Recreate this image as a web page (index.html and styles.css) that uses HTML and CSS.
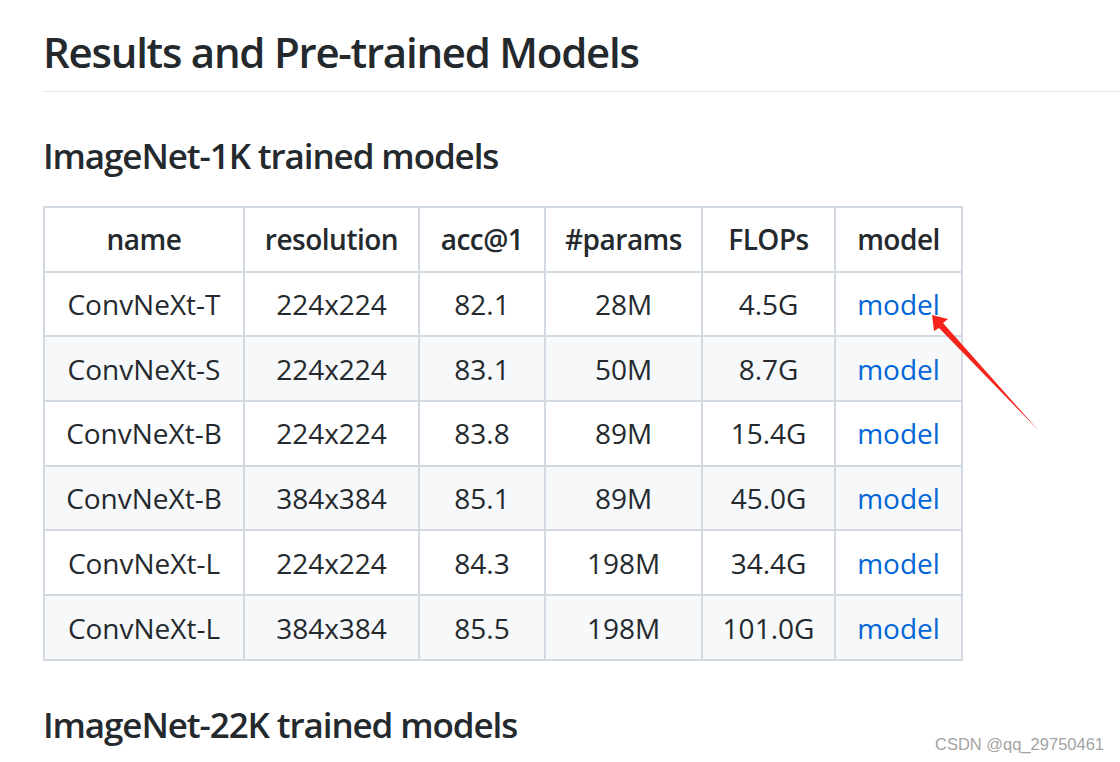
FILE: index.html
```html
<!DOCTYPE html>
<html>
<head>
<meta charset="utf-8">
<link rel="stylesheet" href="styles.css">
</head>
<body>
<div class="markdown">
  <h2 class="h2">Results and Pre-trained Models</h2>
  <h3 class="h3">ImageNet-1K trained models</h3>
  <table class="tbl">
    <colgroup>
      <col class="c1"><col class="c2"><col class="c3"><col class="c4"><col class="c5"><col class="c6">
    </colgroup>
    <thead>
      <tr><th>name</th><th>resolution</th><th>acc@1</th><th>#params</th><th>FLOPs</th><th>model</th></tr>
    </thead>
    <tbody>
      <tr><td>ConvNeXt-T</td><td>224x224</td><td>82.1</td><td>28M</td><td>4.5G</td><td><a class="lnk" href="#">model</a></td></tr>
      <tr><td>ConvNeXt-S</td><td>224x224</td><td>83.1</td><td>50M</td><td>8.7G</td><td><a class="lnk" href="#">model</a></td></tr>
      <tr><td>ConvNeXt-B</td><td>224x224</td><td>83.8</td><td>89M</td><td>15.4G</td><td><a class="lnk" href="#">model</a></td></tr>
      <tr><td>ConvNeXt-B</td><td>384x384</td><td>85.1</td><td>89M</td><td>45.0G</td><td><a class="lnk" href="#">model</a></td></tr>
      <tr><td>ConvNeXt-L</td><td>224x224</td><td>84.3</td><td>198M</td><td>34.4G</td><td><a class="lnk" href="#">model</a></td></tr>
      <tr><td>ConvNeXt-L</td><td>384x384</td><td>85.5</td><td>198M</td><td>101.0G</td><td><a class="lnk" href="#">model</a></td></tr>
    </tbody>
  </table>
  <h3 class="h3">ImageNet-22K trained models</h3>
</div>
<svg class="arrow" width="1120" height="762" viewBox="0 0 1120 762">
  <polygon points="932,315 948,319 943,323 1039,431 939,328 934,331" fill="#f5231b"/>
</svg>
<div class="watermark">CSDN @qq_29750461</div>
</body>
</html>
```
FILE: styles.css
```css
html, body {
  margin: 0;
  padding: 0;
  background: #ffffff;
  width: 1120px;
  height: 762px;
  overflow: hidden;
}
body {
  position: relative;
  font-family: "Open Sans", "Noto Sans", "Noto Sans CJK SC", sans-serif;
  color: #24292e;
  font-size: 28px;
  line-height: 1.5;
}
.markdown {
  padding: 26px 0 0 43px;
}
.h2 {
  margin: 0 0 28px 0;
  font-size: 42px;
  font-weight: 600;
  line-height: 52.5px;
  letter-spacing: -1.25px;
  padding-bottom: 12.6px;
  border-bottom: 1px solid #e4e7eb;
}
.h3 {
  margin: 42px 0 28px 0;
  font-size: 35px;
  font-weight: 600;
  line-height: 43.75px;
  letter-spacing: -1.1px;
}
.tbl {
  border-collapse: collapse;
  table-layout: fixed;
  width: 918px;
  margin: 0 0 28px 0;
}
.c1 { width: 200px; }
.c2 { width: 175px; }
.c3 { width: 126px; }
.c4 { width: 157px; }
.c5 { width: 133px; }
.c6 { width: 127px; }
.tbl th, .tbl td {
  border: 2px solid #d3d9e0;
  padding: 11.5px 0 9.5px 0;
  text-align: center;
  line-height: 41.7px;
  white-space: nowrap;
}
.tbl th {
  font-weight: 600;
  letter-spacing: -0.5px;
}
.tbl tbody tr:nth-child(odd) {
  background: #ffffff;
}
.tbl tbody tr:nth-child(even) {
  background: #f6f8fa;
}
.lnk {
  color: #0366d6;
  text-decoration: none;
}
.arrow {
  position: absolute;
  left: 0;
  top: 0;
  pointer-events: none;
}
.watermark {
  position: absolute;
  left: 935px;
  top: 735px;
  font-family: "Liberation Sans", Arial, sans-serif;
  font-size: 16.5px;
  color: #a3a3a3;
  line-height: 19px;
}
```
